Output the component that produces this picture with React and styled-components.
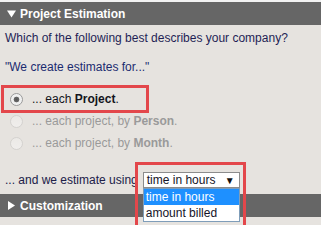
import React from "react"
import styled, { createGlobalStyle } from "styled-components"

const GlobalStyle = createGlobalStyle`
  html, body {
    margin: 0;
    padding: 0;
    background: #ffffff;
  }
  body {
    font-family: "Liberation Sans", Arial, sans-serif;
    font-size: 12px;
  }
`

const options = [
  { lead: "... each ", strong: "Project", tail: ".", checked: true },
  { lead: "... each project, by ", strong: "Person", tail: ".", disabled: true },
  { lead: "... each project, by ", strong: "Month", tail: ".", disabled: true },
]

function Triangle({ down }) {
  return (
    <svg width="9" height="9" viewBox="0 0 9 9">
      {down ? (
        <polygon points="0,1.5 9,1.5 4.5,8.5" fill="#ffffff" />
      ) : (
        <polygon points="1,0 8,4.5 1,9" fill="#ffffff" />
      )}
    </svg>
  )
}

function App() {
  return (
    <>
      <GlobalStyle />
      <Panel>
        <SectionHeader>
          <Triangle down />
          <span>Project Estimation</span>
        </SectionHeader>
        <Body>
          <Question>Which of the following best describes your company?</Question>
          <Quote>"We create estimates for..."</Quote>
          <Options>
            {options.map((o, i) => (
              <OptionRow key={i} $highlight={o.checked}>
                <Radio $checked={o.checked} $disabled={o.disabled} />
                <OptionText $disabled={o.disabled}>
                  {o.lead}
                  <b>{o.strong}</b>
                  {o.tail}
                </OptionText>
              </OptionRow>
            ))}
          </Options>
          <EstimateLine>
            <span>... and we estimate using</span>
            <SelectWrap>
              <SelectBox>
                <span>time in hours</span>
                <Arrow>▼</Arrow>
              </SelectBox>
              <Dropdown>
                <DropItem $active>time in hours</DropItem>
                <DropItem>amount billed</DropItem>
              </Dropdown>
              <RedFrame />
            </SelectWrap>
          </EstimateLine>
        </Body>
        <SectionHeader>
          <Triangle />
          <span>Customization</span>
        </SectionHeader>
        <Footer />
      </Panel>
    </>
  )
}

const Panel = styled.div`
  background: #e6e3df;
  border-top: 2px solid #f2f2f2;
  color: #202050;
`

const SectionHeader = styled.div`
  height: 23px;
  background: #666666;
  color: #ffffff;
  font-weight: bold;
  font-size: 12px;
  display: flex;
  align-items: center;
  gap: 4px;
  padding-left: 7px;
`

const Body = styled.div`
  padding: 6px 0 6px 0;
`

const Question = styled.div`
  line-height: 14px;
  padding-left: 5px;
  color: #1f1f55;
`

const Quote = styled.div`
  line-height: 14px;
  margin-top: 15px;
  padding-left: 5px;
  color: #1b2b70;
`

const Options = styled.div`
  margin-top: 14px;
  padding-left: 4px;
  display: flex;
  flex-direction: column;
  align-items: flex-start;
`

const OptionRow = styled.div`
  height: 22px;
  display: flex;
  align-items: center;
  gap: 9px;
  padding: 0 27px 0 6px;
  outline: ${(p) => (p.$highlight ? "3px solid #e3474b" : "none")};
`

const Radio = styled.span`
  width: 11px;
  height: 11px;
  border-radius: 50%;
  border: 1px solid ${(p) => (p.$disabled ? "#d4d2cf" : "#9a9a9a")};
  background: ${(p) =>
    p.$checked
      ? "radial-gradient(circle, #555 0, #666 2.5px, #eee 3.2px, #f5f5f5 100%)"
      : "linear-gradient(#ebe9e6, #f0eeec)"};
  flex-shrink: 0;
`

const OptionText = styled.span`
  color: ${(p) => (p.$disabled ? "#9a9a9a" : "#141420")};
  line-height: 14px;
`

const EstimateLine = styled.div`
  margin-top: 18px;
  padding-left: 5px;
  display: flex;
  align-items: center;
  gap: 5px;
  color: #202048;
`

const SelectWrap = styled.div`
  position: relative;
  width: 97px;
`

const SelectBox = styled.div`
  height: 16px;
  box-sizing: border-box;
  border: 1px solid #8c8c8c;
  background: #ffffff;
  color: #141428;
  display: flex;
  align-items: center;
  justify-content: space-between;
  padding: 0 4px 0 3px;
  font-size: 12px;
`

const Arrow = styled.span`
  font-size: 10px;
  color: #111;
`

const Dropdown = styled.div`
  position: absolute;
  top: 16px;
  left: 0;
  width: 97px;
  box-sizing: border-box;
  border: 1px solid #7f9db9;
  background: #ffffff;
  z-index: 2;
`

const DropItem = styled.div`
  height: 16px;
  line-height: 16px;
  padding-left: 2px;
  font-size: 12px;
  background: ${(p) => (p.$active ? "#1e90ff" : "#ffffff")};
  color: ${(p) => (p.$active ? "#ffffff" : "#141428")};
`

const RedFrame = styled.div`
  position: absolute;
  left: -8px;
  top: -10px;
  width: 111px;
  height: 69px;
  box-sizing: border-box;
  border: 3px solid #e3474b;
  z-index: 3;
  pointer-events: none;
`

const Footer = styled.div`
  height: 8px;
`

export default App
